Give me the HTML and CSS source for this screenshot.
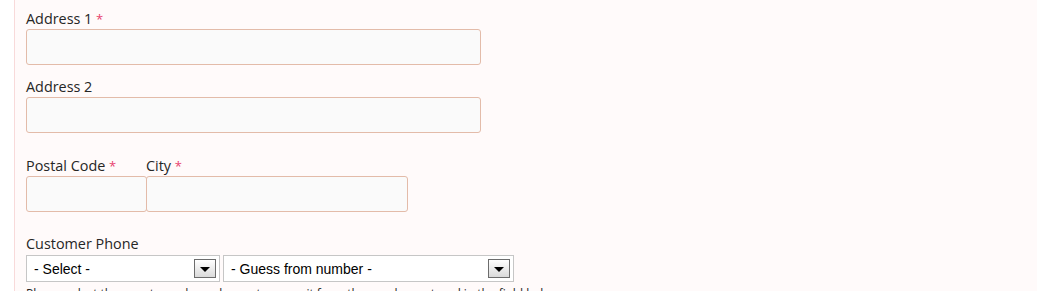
FILE: index.html
```html
<!DOCTYPE html>
<html lang="en">
<head>
<meta charset="utf-8">
<title>Address form</title>
<link rel="stylesheet" href="styles.css">
</head>
<body>
<div class="page">
  <form class="panel">
    <div class="field">
      <label class="label" for="addr1">Address 1 <span class="req">*</span></label>
      <input class="input input-wide" id="addr1" type="text">
    </div>
    <div class="field">
      <label class="label" for="addr2">Address 2</label>
      <input class="input input-wide" id="addr2" type="text">
    </div>
    <div class="row row-city">
      <div class="field field-postal">
        <label class="label" for="postal">Postal Code <span class="req">*</span></label>
        <input class="input" id="postal" type="text">
      </div>
      <div class="field field-city">
        <label class="label" for="city">City <span class="req">*</span></label>
        <input class="input" id="city" type="text">
      </div>
    </div>
    <div class="field field-phone">
      <label class="label" for="phone-country">Customer Phone</label>
      <div class="selects">
        <div class="select select-country">
          <select id="phone-country"><option>- Select -</option></select>
          <span class="arrow"><span class="tri"></span></span>
        </div>
        <div class="select select-guess">
          <select><option>- Guess from number -</option></select>
          <span class="arrow"><span class="tri"></span></span>
        </div>
      </div>
      <p class="help">Please select the country code or choose to guess it from the number entered in the field below.</p>
    </div>
  </form>
</div>
</body>
</html>
```

FILE: styles.css
```css
html, body {
  margin: 0;
  padding: 0;
  background: #ffffff;
  height: 100%;
  overflow: hidden;
}

.page {
  padding-left: 14px;
  height: 100%;
}

.panel {
  box-sizing: border-box;
  height: 100%;
  margin: 0;
  background: #fffafa;
  border-left: 1px solid #f8dada;
  padding: 9px 0 0 11px;
  font-family: "Open Sans", "Noto Sans", sans-serif;
  color: #262626;
}

.field {
  display: flex;
  flex-direction: column;
  align-items: flex-start;
  margin-bottom: 12px;
}

.label {
  font-size: 14.4px;
  line-height: 20px;
  color: #262626;
}

.req {
  color: #e8416e;
  font-size: 13px;
}

.input {
  box-sizing: border-box;
  height: 36px;
  margin: 0;
  border: 1px solid #e3bba9;
  border-radius: 3px;
  background: #fafafa;
  font-family: inherit;
  font-size: 14px;
  padding: 0 8px;
  outline: none;
}

.input-wide {
  width: 455px;
}

.row-city {
  display: flex;
  margin-top: 23px;
  margin-bottom: 22px;
}

.row-city .field {
  margin-bottom: 0;
}

.field-postal .input {
  width: 121px;
}

.field-postal {
  width: 120px;
}

.field-city .input {
  width: 262px;
}

.selects {
  display: flex;
  gap: 3px;
  margin-top: 1px;
}

.select {
  box-sizing: border-box;
  height: 27px;
  display: flex;
  align-items: center;
  border: 1px solid #c6c6c6;
  background: #ffffff;
  padding: 0 3px 0 7px;
}

.select-country {
  width: 194px;
}

.select-guess {
  width: 291px;
}

.select select {
  flex: 1;
  min-width: 0;
  appearance: none;
  -webkit-appearance: none;
  border: none;
  background: transparent;
  padding: 0;
  margin: 0;
  font-family: "Liberation Sans", Arial, sans-serif;
  font-size: 14px;
  color: #000000;
  outline: none;
}

.arrow {
  box-sizing: border-box;
  width: 22px;
  height: 19px;
  border: 1px solid #6c6c6c;
  background: linear-gradient(#ffffff, #dadada);
  display: flex;
  align-items: center;
  justify-content: center;
}

.tri {
  width: 0;
  height: 0;
  border-left: 5px solid transparent;
  border-right: 5px solid transparent;
  border-top: 5px solid #000000;
  margin-top: 1px;
}

.help {
  margin: 4px 0 0;
  font-size: 12px;
  line-height: 16px;
  color: #262626;
}
```
